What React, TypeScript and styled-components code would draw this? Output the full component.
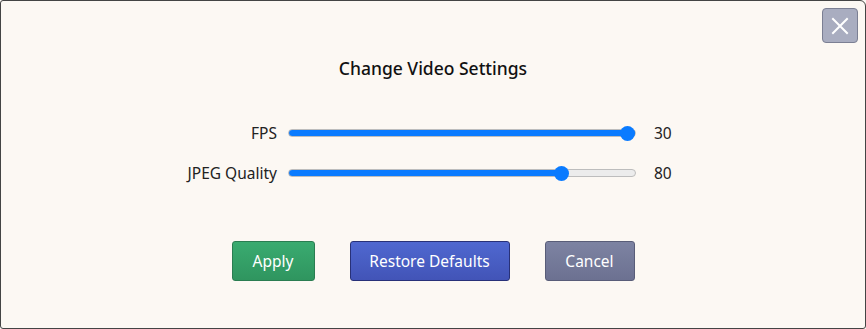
import React from "react";
import styled, { createGlobalStyle } from "styled-components";

const GlobalStyle = createGlobalStyle`
  html, body {
    margin: 0;
    padding: 0;
    background: #fcf8f3;
  }
  body {
    font-family: "Noto Sans", "Open Sans", sans-serif;
  }
  * {
    box-sizing: border-box;
  }
`;

type SliderSetting = {
  label: string;
  min: number;
  max: number;
  value: number;
};

const SETTINGS: SliderSetting[] = [
  { label: "FPS", min: 0, max: 30, value: 30 },
  { label: "JPEG Quality", min: 0, max: 100, value: 80 },
];

const App = () => {
  const [values, setValues] = React.useState(SETTINGS.map((s) => s.value));

  const update = (idx: number, v: number) => {
    setValues((prev) => prev.map((p, i) => (i === idx ? v : p)));
  };

  return (
    <>
      <GlobalStyle />
      <Dialog>
        <CloseButton aria-label="close">
          <svg width="18" height="18" viewBox="0 0 18 18">
            <path d="M2 2 L16 16 M16 2 L2 16" stroke="#fff" strokeWidth="2" strokeLinecap="square" />
          </svg>
        </CloseButton>
        <Title>Change Video Settings</Title>
        <SettingsGrid>
          {SETTINGS.map((s, i) => {
            const pct = ((values[i] - s.min) / (s.max - s.min)) * 100;
            return (
              <React.Fragment key={s.label}>
                <Label>{s.label}</Label>
                <Range
                  type="range"
                  min={s.min}
                  max={s.max}
                  value={values[i]}
                  onChange={(e) => update(i, Number(e.target.value))}
                  style={{ "--fill": `${pct}%` } as React.CSSProperties}
                />
                <Value>{values[i]}</Value>
              </React.Fragment>
            );
          })}
        </SettingsGrid>
        <ButtonRow>
          <ActionButton $variant="apply">Apply</ActionButton>
          <ActionButton $variant="restore">Restore Defaults</ActionButton>
          <ActionButton $variant="cancel">Cancel</ActionButton>
        </ButtonRow>
      </Dialog>
    </>
  );
};

const Dialog = styled.div`
  position: relative;
  width: 866px;
  height: 329px;
  background: #fcf8f3;
  border: 1px solid #444;
  border-radius: 3px 6px 3px 3px;
  padding-top: 54px;
  display: flex;
  flex-direction: column;
  align-items: center;
`;

const CloseButton = styled.button`
  position: absolute;
  top: 7px;
  right: 7px;
  width: 36px;
  height: 35px;
  padding: 0;
  display: flex;
  align-items: center;
  justify-content: center;
  background: #a9adc0;
  border: 1px solid #7b7f93;
  border-radius: 4px;
  cursor: pointer;
`;

const Title = styled.h2`
  margin: 0;
  font-size: 17.5px;
  font-weight: 500;
  color: #111;
  line-height: 26px;
`;

const SettingsGrid = styled.div`
  margin-top: 32px;
  margin-left: -7px;
  display: grid;
  grid-template-columns: 110px 348px 45px;
  grid-auto-rows: 40px;
  column-gap: 11px;
  align-items: center;
`;

const Label = styled.span`
  text-align: right;
  font-size: 15.5px;
  color: #222;
`;

const Value = styled.span`
  margin-left: 7px;
  font-size: 15.5px;
  color: #222;
`;

const Range = styled.input`
  -webkit-appearance: none;
  appearance: none;
  width: 348px;
  height: 16px;
  margin: 0;
  background: transparent;
  cursor: pointer;

  &::-webkit-slider-runnable-track {
    height: 8px;
    border-radius: 4px;
    border: 1px solid #bdbdbd;
    background: linear-gradient(
      to right,
      #0a7bff 0,
      #0a7bff var(--fill),
      #ececec var(--fill),
      #ececec 100%
    );
  }

  &::-webkit-slider-thumb {
    -webkit-appearance: none;
    appearance: none;
    width: 15px;
    height: 15px;
    margin-top: -4.5px;
    border-radius: 50%;
    background: #0a7bff;
    border: none;
  }
`;

const VARIANTS = {
  apply: { top: "#3aab70", bottom: "#2f955f", border: "#2a7d51", width: "83px" },
  restore: { top: "#4f68d0", bottom: "#4254b7", border: "#283178", width: "160px" },
  cancel: { top: "#7d83a2", bottom: "#6c7191", border: "#595d78", width: "90px" },
};

const ButtonRow = styled.div`
  margin-top: 48px;
  display: flex;
  gap: 35px;
`;

const ActionButton = styled.button<{ $variant: keyof typeof VARIANTS }>`
  width: ${(p) => VARIANTS[p.$variant].width};
  height: 40px;
  border-radius: 3px;
  border: 1px solid ${(p) => VARIANTS[p.$variant].border};
  background: linear-gradient(
    to bottom,
    ${(p) => VARIANTS[p.$variant].top},
    ${(p) => VARIANTS[p.$variant].bottom}
  );
  color: #fff;
  font-family: inherit;
  font-size: 15.5px;
  cursor: pointer;
`;

export default App;
